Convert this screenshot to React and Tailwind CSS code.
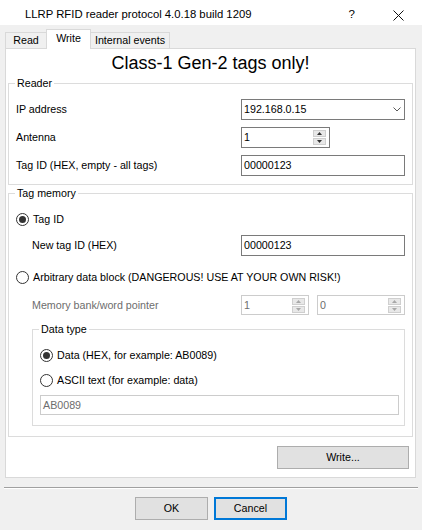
import React from "react";

function Radio({ checked, children, className = "" }) {
  return (
    <div className={"flex items-center h-[16px] " + className}>
      <div className="w-[13px] h-[13px] rounded-full border border-[#333333] bg-white flex items-center justify-center shrink-0">
        {checked && <div className="w-[7px] h-[7px] rounded-full bg-[#333333]" />}
      </div>
      <span className="ml-[4px] leading-[13px]">{children}</span>
    </div>
  );
}

function SpinArrows({ disabled }) {
  const c = disabled ? "#a8a8a8" : "#333333";
  return (
    <div className="flex flex-col w-[13px] h-[15px] mr-[3px] gap-[1px]">
      <div className="flex-1 bg-[#e8e8e8] border border-[#cfcfcf] flex items-center justify-center">
        <svg width="5" height="3" viewBox="0 0 5 3"><path d="M2.5 0 L5 3 L0 3 Z" fill={c} /></svg>
      </div>
      <div className="flex-1 bg-[#e8e8e8] border border-[#cfcfcf] flex items-center justify-center">
        <svg width="5" height="3" viewBox="0 0 5 3"><path d="M0 0 L5 0 L2.5 3 Z" fill={c} /></svg>
      </div>
    </div>
  );
}

function Spin({ value, width, disabled, h = "h-[21px]" }) {
  return (
    <div
      className={
        "flex items-center bg-white border " +
        h +
        " " +
        (disabled ? "border-[#cccccc] text-[#6d6d6d]" : "border-[#7a7a7a]")
      }
      style={{ width }}
    >
      <div className="flex-1 pl-[2px] leading-[13px]">{value}</div>
      <SpinArrows disabled={disabled} />
    </div>
  );
}

function TextBox({ value, className = "", disabled }) {
  return (
    <div
      className={
        "h-[21px] bg-white border flex items-center pl-[2px] leading-[13px] " +
        (disabled ? "border-[#cccccc] text-[#6d6d6d] " : "border-[#7a7a7a] ") +
        className
      }
    >
      {value}
    </div>
  );
}

export default function App() {
  return (
    <div className="w-[422px] h-[530px] bg-[#f0f0f0] flex flex-col font-['Liberation_Sans',Arial,sans-serif] text-[10.7px] text-black overflow-hidden">
      {/* Title bar */}
      <div className="h-[25px] bg-white flex items-start shrink-0">
        <span className="ml-[25px] mt-[7px] text-[11.3px] leading-[14px]">
          LLRP RFID reader protocol 4.0.18 build 1209
        </span>
        <span className="ml-auto mt-[7px] text-[11.5px] leading-[14px] mr-[38px]">?</span>
        <svg className="mt-[10px] mr-[18px]" width="11" height="11" viewBox="0 0 11 11">
          <path d="M0.5 0.5 L10.5 10.5 M10.5 0.5 L0.5 10.5" stroke="#111" strokeWidth="1" />
        </svg>
      </div>

      {/* Tabs */}
      <div className="h-[23px] flex items-end pl-[5px] shrink-0">
        <div className="w-[41px] h-[16px] border border-b-0 border-r-0 border-[#d9d9d9] bg-[#f0f0f0] flex items-center justify-center leading-[13px]">
          Read
        </div>
        <div className="w-[45px] h-[20px] border border-b-0 border-[#d9d9d9] bg-white relative z-10 -mb-[1px] flex items-start justify-center pt-[2px] leading-[13px]">
          Write
        </div>
        <div className="w-[79px] h-[16px] border border-b-0 border-l-0 border-[#d9d9d9] bg-[#f0f0f0] flex items-center justify-center leading-[13px]">
          Internal events
        </div>
      </div>

      {/* Panel */}
      <div className="ml-[5px] w-[411px] h-[430px] bg-white border border-[#d9d9d9] flex flex-col shrink-0">
        <div className="mt-[4px] h-[20px] text-center text-[18px] leading-[20px]">Class-1 Gen-2 tags only!</div>

        <fieldset className="mt-[4px] mx-[2px] border border-[#dcdcdc] px-[7px] pb-[8px]">
          <legend className="px-[2px] -ml-[1px] leading-[13px]">Reader</legend>
          <div className="mt-[9px] flex items-center justify-between">
            <span>IP address</span>
            <div className="w-[164px] h-[21px] border border-[#7a7a7a] bg-white flex items-center pl-[2px] leading-[13px]">
              <span className="flex-1">192.168.0.15</span>
              <svg className="mr-[3px]" width="8" height="5" viewBox="0 0 8 5">
                <path d="M0.5 0.5 L4 4 L7.5 0.5" stroke="#5a5a5a" strokeWidth="1" fill="none" />
              </svg>
            </div>
          </div>
          <div className="mt-[7px] flex items-center">
            <span>Antenna</span>
            <div className="ml-auto w-[164px]">
              <Spin value="1" width={89} />
            </div>
          </div>
          <div className="mt-[7px] flex items-center justify-between">
            <span>Tag ID (HEX, empty - all tags)</span>
            <TextBox value="00000123" className="w-[164px]" />
          </div>
        </fieldset>

        <fieldset className="mt-[2px] mx-[2px] border border-[#dcdcdc] px-[7px] pb-[10px]">
          <legend className="px-[2px] -ml-[1px] leading-[13px]">Tag memory</legend>
          <Radio checked className="mt-[11px]">Tag ID</Radio>
          <div className="mt-[8px] flex items-center justify-between">
            <span className="ml-[16px]">New tag ID (HEX)</span>
            <TextBox value="00000123" className="w-[164px]" />
          </div>
          <Radio className="mt-[13px]">Arbitrary data block (DANGEROUS! USE AT YOUR OWN RISK!)</Radio>
          <div className="mt-[10px] flex items-center">
            <span className="ml-[16px] text-[#6d6d6d]">Memory bank/word pointer</span>
            <div className="ml-auto w-[164px] flex gap-[8px]">
              <Spin value="1" width={68} disabled h="h-[20px]" />
              <Spin value="0" width={88} disabled h="h-[20px]" />
            </div>
          </div>

          <fieldset className="mt-[8px] ml-[16px] border border-[#dcdcdc] pl-[7px] pr-[5px] pb-[10px]">
            <legend className="px-[2px] -ml-[1px] leading-[13px]">Data type</legend>
            <Radio checked className="mt-[11px]">Data (HEX, for example: AB0089)</Radio>
            <Radio className="mt-[9px]">ASCII text (for example: data)</Radio>
            <div className="mt-[7px] h-[20px] bg-white border border-[#cccccc] text-[#6d6d6d] flex items-center pl-[2px] leading-[13px]">
              AB0089
            </div>
          </fieldset>
        </fieldset>

        <div className="mt-[9px] flex justify-end pr-[6px]">
          <div className="w-[132px] h-[23px] bg-[#e1e1e1] border border-[#adadad] flex items-center justify-center leading-[13px]">
            Write...
          </div>
        </div>
      </div>

      {/* Separator */}
      <div className="mt-[9px] ml-[4px] w-[414px] border-t border-[#a0a0a0] border-b border-b-white" />

      {/* Buttons */}
      <div className="mt-[8px] flex justify-center gap-[6px]">
        <div className="w-[73px] h-[23px] bg-[#e1e1e1] border border-[#adadad] flex items-center justify-center leading-[13px]">
          OK
        </div>
        <div className="w-[73px] h-[23px] bg-[#e1e1e1] border-2 border-[#0078d7] flex items-center justify-center leading-[13px]">
          Cancel
        </div>
      </div>
    </div>
  );
}
